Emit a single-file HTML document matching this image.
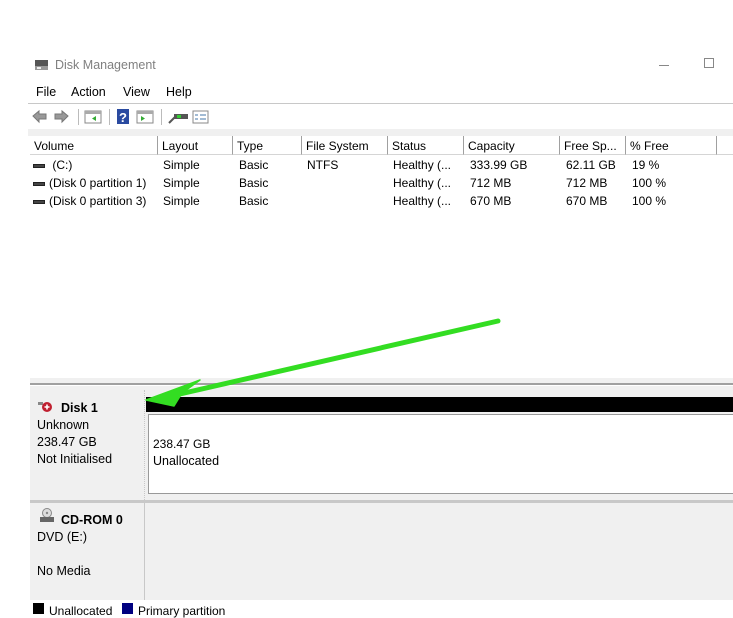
<!DOCTYPE html>
<html><head><meta charset="utf-8"><style>
*{margin:0;padding:0;box-sizing:border-box}
body{width:733px;height:613px;overflow:hidden;background:#fff;font-family:"Liberation Sans",sans-serif;font-size:12px;color:#000;position:relative}
.a{position:absolute;white-space:nowrap}
.hd{position:absolute;top:136px;height:19px;border-right:1px solid #a0a0a0;border-bottom:1px solid #d5d5d5;padding:3px 0 0 4px;font-size:12px}
.drv{display:inline-block;width:12px;height:4px;background:#444;border:1px solid #222;vertical-align:middle;margin-right:4px}
</style></head><body>
<svg class="a" style="left:34px;top:58px" width="16" height="14"><rect x="1" y="2" width="13" height="6" fill="#555"/><rect x="1" y="8" width="13" height="4" fill="#999"/><rect x="3" y="9" width="4" height="2" fill="#eee"/></svg>
<div class="a" style="left:55px;top:58px;color:#808080;font-size:12.5px">Disk Management</div>
<div class="a" style="left:659px;top:65px;width:10px;height:1px;background:#888"></div>
<div class="a" style="left:704px;top:58px;width:10px;height:10px;border:1px solid #888"></div>
<div class="a" style="left:36px;top:85px;font-size:12.5px">File</div>
<div class="a" style="left:71px;top:85px;font-size:12.5px">Action</div>
<div class="a" style="left:123px;top:85px;font-size:12.5px">View</div>
<div class="a" style="left:166px;top:85px;font-size:12.5px">Help</div>
<div class="a" style="left:28px;top:103px;width:705px;height:1px;background:#c8c8c8"></div>
<svg class="a" style="left:30px;top:107px" width="200" height="20">
<path d="M3 9 L9 4 L9 7 L16 7 L16 12 L9 12 L9 15 Z" fill="#999" stroke="#777"/>
<path d="M38 9 L32 4 L32 7 L25 7 L25 12 L32 12 L32 15 Z" fill="#999" stroke="#777"/>
<rect x="48" y="2" width="1" height="16" fill="#bbb"/>
<rect x="55" y="4" width="16" height="12" fill="#fff" stroke="#888"/><rect x="55" y="4" width="16" height="3" fill="#aaa"/><path d="M66 9 L62 11.5 L66 14Z" fill="#3a3"/>
<rect x="79" y="2" width="1" height="16" fill="#bbb"/>
<rect x="87" y="2" width="12" height="15" fill="#2a4aa0"/><text x="89" y="15" fill="#fff" font-size="13" font-family="Liberation Sans" font-weight="bold">?</text>
<rect x="107" y="4" width="16" height="12" fill="#fff" stroke="#888"/><rect x="107" y="4" width="16" height="3" fill="#aaa"/><path d="M111 9 L115 11.5 L111 14Z" fill="#3a3"/>
<rect x="131" y="2" width="1" height="16" fill="#bbb"/>
<rect x="144" y="7" width="14" height="5" fill="#555"/><rect x="147" y="8" width="4" height="3" fill="#3c3"/><line x1="139" y1="16" x2="145" y2="10" stroke="#555" stroke-width="2"/>
<rect x="163" y="4" width="15" height="12" fill="#fff" stroke="#888"/><path d="M165 8h3M165 12h3M170 8h6M170 12h6" stroke="#47a"/>
</svg>
<div class="a" style="left:28px;top:129px;width:705px;height:7px;background:#f0f0f0"></div>
<div class="hd" style="left:30px;width:128px">Volume</div>
<div class="hd" style="left:158px;width:75px">Layout</div>
<div class="hd" style="left:233px;width:69px">Type</div>
<div class="hd" style="left:302px;width:86px">File System</div>
<div class="hd" style="left:388px;width:76px">Status</div>
<div class="hd" style="left:464px;width:96px">Capacity</div>
<div class="hd" style="left:560px;width:66px">Free Sp...</div>
<div class="hd" style="left:626px;width:91px">% Free</div>
<div class="hd" style="left:717px;width:20px"></div>
<div class="a" style="left:33px;top:158px"><span class="drv"></span> (C:)</div>
<div class="a" style="left:33px;top:176px"><span class="drv"></span>(Disk 0 partition 1)</div>
<div class="a" style="left:33px;top:194px"><span class="drv"></span>(Disk 0 partition 3)</div>
<div class="a" style="left:163px;top:158px">Simple</div><div class="a" style="left:163px;top:176px">Simple</div><div class="a" style="left:163px;top:194px">Simple</div>
<div class="a" style="left:239px;top:158px">Basic</div><div class="a" style="left:239px;top:176px">Basic</div><div class="a" style="left:239px;top:194px">Basic</div>
<div class="a" style="left:307px;top:158px">NTFS</div>
<div class="a" style="left:393px;top:158px">Healthy (...</div><div class="a" style="left:393px;top:176px">Healthy (...</div><div class="a" style="left:393px;top:194px">Healthy (...</div>
<div class="a" style="left:470px;top:158px">333.99 GB</div><div class="a" style="left:470px;top:176px">712 MB</div><div class="a" style="left:470px;top:194px">670 MB</div>
<div class="a" style="left:566px;top:158px">62.11 GB</div><div class="a" style="left:566px;top:176px">712 MB</div><div class="a" style="left:566px;top:194px">670 MB</div>
<div class="a" style="left:632px;top:158px">19 %</div><div class="a" style="left:632px;top:176px">100 %</div><div class="a" style="left:632px;top:194px">100 %</div>
<div class="a" style="left:30px;top:378px;width:703px;height:6px;background:#f0f0f0"></div>
<div class="a" style="left:30px;top:383px;width:703px;height:2px;background:#a0a0a0"></div>
<div class="a" style="left:30px;top:386px;width:703px;height:227px;background:#f0f0f0"></div>
<div class="a" style="left:30px;top:390px;width:115px;height:110px;background:#f0f0f0;border-right:1px dotted #c8c8c8"></div>
<div class="a" style="left:146px;top:397px;width:587px;height:15px;background:#000"></div>
<div class="a" style="left:148px;top:414px;width:585px;height:80px;background:#fff;border:1px solid #999;border-right:none"></div>
<div class="a" style="left:30px;top:500px;width:703px;height:3px;background:#c8c8c8"></div>
<div class="a" style="left:144px;top:503px;width:1px;height:97px;background:#c8c8c8"></div>
<svg class="a" style="left:38px;top:400px" width="16" height="14"><rect x="0" y="2" width="5" height="3" fill="#888"/><circle cx="9" cy="7" r="5" fill="#c02030"/><path d="M6.5 7h5M9 4.5v5" stroke="#fff" stroke-width="1.6"/></svg>
<div class="a" style="left:61px;top:401px;font-weight:bold;font-size:12.5px">Disk 1</div>
<div class="a" style="left:37px;top:418px;font-size:12.5px">Unknown</div>
<div class="a" style="left:37px;top:435px;font-size:12.5px">238.47 GB</div>
<div class="a" style="left:37px;top:452px;font-size:12.5px">Not Initialised</div>
<div class="a" style="left:153px;top:437px">238.47 GB</div>
<div class="a" style="left:153px;top:454px;font-size:12.5px">Unallocated</div>
<svg class="a" style="left:38px;top:508px" width="18" height="16"><circle cx="9" cy="5" r="4.5" fill="#ddd" stroke="#888"/><circle cx="9" cy="5" r="1.2" fill="#888"/><rect x="2" y="9" width="14" height="5" fill="#666"/></svg>
<div class="a" style="left:61px;top:513px;font-weight:bold;font-size:12.5px">CD-ROM 0</div>
<div class="a" style="left:37px;top:530px;font-size:12.5px">DVD (E:)</div>
<div class="a" style="left:37px;top:564px;font-size:12.5px">No Media</div>
<div class="a" style="left:30px;top:600px;width:703px;height:13px;background:#fff"></div>
<div class="a" style="left:33px;top:603px;width:11px;height:11px;background:#000"></div>
<div class="a" style="left:49px;top:604px">Unallocated</div>
<div class="a" style="left:122px;top:603px;width:11px;height:11px;background:#000080"></div>
<div class="a" style="left:138px;top:604px">Primary partition</div>
<svg class="a" style="left:0;top:0" width="733" height="613">
<line x1="498" y1="321" x2="180" y2="394" stroke="#33dd22" stroke-width="5" stroke-linecap="round"/>
<path d="M146 400 L200 380 L182 393 L174 406 Z" fill="#33dd22" stroke="#33dd22" stroke-width="1.5" stroke-linejoin="round"/>
</svg>
</body></html>
